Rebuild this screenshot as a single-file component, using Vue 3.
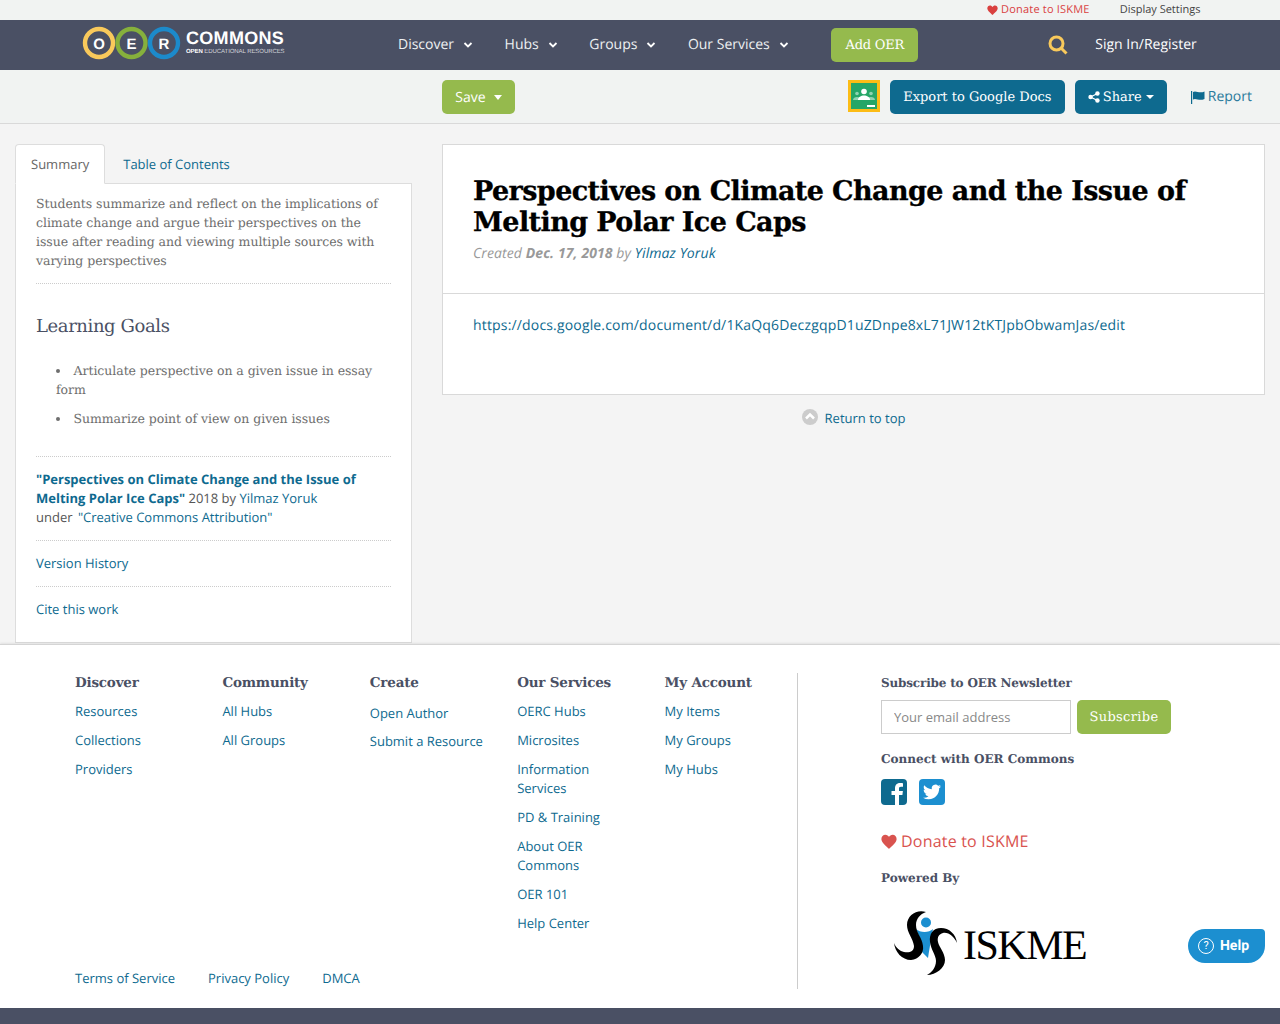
<template>
  <div class="page">
    <div class="topbar">
      <a class="donate-top">
        <svg class="heart-sm" viewBox="0 0 24 22"><path :d="heartPath" /></svg>
        Donate to ISKME
      </a>
      <a class="display-settings">Display Settings</a>
    </div>

    <nav class="navbar">
      <div class="logo">
        <svg width="104" height="34" viewBox="0 0 104 34">
          <circle cx="17" cy="17" r="14" fill="none" stroke="#f9c95b" stroke-width="4.4" />
          <circle cx="49.5" cy="17" r="14" fill="none" stroke="#86b03c" stroke-width="4.4" />
          <circle cx="82" cy="17" r="14" fill="none" stroke="#1c8acb" stroke-width="4.4" />
          <text x="17" y="22.500" class="logo-letter">O</text>
          <text x="49.5" y="22.500" class="logo-letter">E</text>
          <text x="82" y="22.500" class="logo-letter">R</text>
        </svg>
        <div class="logo-words">
          <div class="logo-main">COMMONS</div>
          <div class="logo-sub"><b>OPEN</b> EDUCATIONAL RESOURCES</div>
        </div>
      </div>
      <ul class="menu">
        <li v-for="m in menu" :key="m">
          {{ m }}
          <svg class="chev" viewBox="0 0 10 8"><path d="M1.5 2 L5 5.5 L8.5 2" /></svg>
        </li>
      </ul>
      <a class="btn add-oer">Add OER</a>
      <svg class="search" viewBox="0 0 20 20"><circle cx="8.5" cy="8.5" r="6.5" /><path d="M13.3 13.3 L18.5 18.5" /></svg>
      <a class="signin">Sign In/Register</a>
    </nav>

    <div class="subbar">
      <a class="btn save">Save <span class="caret"></span></a>
      <div class="sub-right">
        <svg class="classroom" viewBox="0 0 32 32">
          <rect x="1.5" y="1.5" width="29" height="29" fill="#25a667" stroke="#fcbc15" stroke-width="3" />
          <circle cx="9" cy="13.500" r="1.800" fill="#8fd3b0" />
          <circle cx="23" cy="13.500" r="1.800" fill="#8fd3b0" />
          <path d="M5 20 c0-4 8-4 8 0z M19 20 c0-4 8-4 8 0z" fill="#8fd3b0" />
          <circle cx="16" cy="11.500" r="2.800" fill="#fff" />
          <path d="M10 20 c0-6 12-6 12 0z" fill="#fff" />
          <rect x="19" y="25" width="8" height="2" fill="#fff" />
        </svg>
        <a class="btn blue export">Export to Google Docs</a>
        <a class="btn blue share">
          <svg class="share-ic" viewBox="0 0 14 14">
            <circle cx="11" cy="3" r="2.600" /><circle cx="3" cy="7" r="2.600" /><circle cx="11" cy="11" r="2.600" />
            <path d="M11 3 L3 7 L11 11" fill="none" stroke="#fff" stroke-width="1.400" />
          </svg>
          Share <span class="caret sm"></span>
        </a>
        <a class="report">
          <svg class="flag" viewBox="0 0 14 14">
            <rect x="0" y="1" width="1.200" height="13" />
            <path d="M2 2 C5 0 8 4 13.500 1.500 V9 C8 11.500 5 7.500 2 9.500z" />
          </svg>
          Report
        </a>
      </div>
    </div>

    <main class="content">
      <aside class="side">
        <div class="tabs">
          <a class="tab active">Summary</a>
          <a class="tab">Table of Contents</a>
        </div>
        <div class="panel">
          <p class="summary">Students summarize and reflect on the implications of climate change and argue their perspectives on the issue after reading and viewing multiple sources with varying perspectives</p>
          <div class="goals">
            <h3>Learning Goals</h3>
            <ul>
              <li>Articulate perspective on a given issue in essay form</li>
              <li>Summarize point of view on given issues</li>
            </ul>
          </div>
          <div class="cite">
            <a class="cite-title">"Perspectives on Climate Change and the Issue of Melting Polar Ice Caps"</a>
            2018 by <a>Yilmaz Yoruk</a><br />
            under <a class="cite-license">"Creative Commons Attribution"</a>
          </div>
          <div class="side-link"><a>Version History</a></div>
          <div class="side-link last"><a>Cite this work</a></div>
        </div>
      </aside>

      <section class="detail">
        <div class="card">
          <div class="card-head">
            <h1>Perspectives on Climate Change and the Issue of Melting Polar Ice Caps</h1>
            <div class="created">Created <b>Dec. 17, 2018</b> by <a>Yilmaz Yoruk</a></div>
          </div>
          <div class="card-body">
            <a>https://docs.google.com/document/d/1KaQq6DeczgqpD1uZDnpe8xL71JW12tKTJpbObwamJas/edit</a>
          </div>
        </div>
        <div class="to-top">
          <svg class="up" viewBox="0 0 16 16"><circle cx="8" cy="8" r="8" /><path d="M4 9.500 L8 5.500 L12 9.500" /></svg>
          <a>Return to top</a>
        </div>
      </section>
    </main>

    <footer class="footer">
      <div class="foot-left">
        <div class="foot-cols">
          <div v-for="col in columns" :key="col.title" class="foot-col" :class="{ create: col.title === 'Create' }">
            <h4>{{ col.title }}</h4>
            <a v-for="l in col.links" :key="l">{{ l }}</a>
          </div>
        </div>
        <div class="legal">
          <a>Terms of Service</a>
          <a>Privacy Policy</a>
          <a>DMCA</a>
        </div>
      </div>
      <div class="foot-right">
        <h4 class="news">Subscribe to OER Newsletter</h4>
        <div class="subscribe">
          <input type="text" placeholder="Your email address" />
          <a class="btn sub-btn">Subscribe</a>
        </div>
        <h4 class="connect">Connect with OER Commons</h4>
        <div class="social">
          <svg viewBox="0 0 26 26">
            <rect width="26" height="26" rx="4" fill="#0e6a8f" />
            <path d="M18 26 V16 h3.400 l.5-4 H18 V9.600 c0-1.200.4-1.900 2-1.900 h2 V4.200 C21.600 4.100 20.500 4 19.200 4 C16.200 4 14 5.900 14 9.200 V12 h-3.500 v4 H14 v10z" fill="#fff" />
          </svg>
          <svg viewBox="0 0 26 26">
            <rect width="26" height="26" rx="4" fill="#1c8fd0" />
            <g transform="translate(4 4) scale(.75)">
              <path d="M23.953 4.570a10 10 0 01-2.825.775 4.958 4.958 0 002.163-2.723c-.951.555-2.005.959-3.127 1.184a4.920 4.920 0 00-8.384 4.482C7.690 8.095 4.067 6.130 1.640 3.162a4.822 4.822 0 00-.666 2.475c0 1.710.870 3.213 2.188 4.096a4.904 4.904 0 01-2.228-.616v.06a4.923 4.923 0 003.946 4.827 4.996 4.996 0 01-2.212.085 4.936 4.936 0 004.604 3.417 9.867 9.867 0 01-6.102 2.105c-.39 0-.779-.023-1.170-.067a13.995 13.995 0 007.557 2.209c9.053 0 13.998-7.496 13.998-13.985 0-.21 0-.42-.015-.63A9.935 9.935 0 0024 4.590z" fill="#fff" />
            </g>
          </svg>
        </div>
        <a class="donate-big">
          <svg class="heart-lg" viewBox="0 0 24 22"><path :d="heartPath" /></svg>
          Donate to ISKME
        </a>
        <h4 class="powered">Powered By</h4>
        <div class="iskme">
          <svg width="72" height="72" viewBox="0 0 72 72">
            <path d="M27 23 C31 27 40 27 44 23 L42 34 C41 40 40 45 39 52 L33 46 C33 36 30 30 27 23Z" fill="#1c8fd0" />
            <circle cx="37" cy="16.500" r="5" fill="#1c8fd0" />
            <path d="M37 6 C28 3 18 9 18 19 C18 27 24 32 25 40 C25 46 20 47 15 46 C11 45 7 42 5 37 C6 46 13 54 22 54 C30 53 35 47 34 40 C33 31 27 27 27 19 C27 13 31 8 37 6Z" fill="#000" />
            <path d="M68 37 C67 28 60 22 52 22 C44 22 40 28 41 36 C42 44 47 49 47 55 C47 62 42 67 38 69 C47 69 56 62 56 54 C56 47 50 41 49 36 C48 31 50 28 54 27 C60 26 65 31 68 37Z" fill="#000" />
          </svg>
          <span class="iskme-word">ISKME</span>
        </div>
      </div>
    </footer>
    <div class="bottom-bar"></div>

    <a class="help">
      <span class="help-q">?</span>
      Help
    </a>
  </div>
</template>

<script setup>
const heartPath =
  "M12 22 C11 21 3 15 1 9.500 C-.5 5 2.500 1 6.500 1 C9 1 11 2.500 12 4.200 C13 2.500 15 1 17.500 1 C21.500 1 24.500 5 23 9.500 C21 15 13 21 12 22Z";

const menu = ["Discover", "Hubs", "Groups", "Our Services"];

const columns = [
  { title: "Discover", links: ["Resources", "Collections", "Providers"] },
  { title: "Community", links: ["All Hubs", "All Groups"] },
  { title: "Create", links: ["Open Author", "Submit a Resource"] },
  {
    title: "Our Services",
    links: ["OERC Hubs", "Microsites", "Information Services", "PD & Training", "About OER Commons", "OER 101", "Help Center"],
  },
  { title: "My Account", links: ["My Items", "My Groups", "My Hubs"] },
];
</script>

<style>
html,
body {
  margin: 0;
  background: #f4f4f4;
}
</style>

<style scoped>
.page {
  font-family: "Open Sans", sans-serif;
  font-size: 13px;
  line-height: 19px;
  color: #555;
  height: 1024px;
  overflow: hidden;
  text-rendering: geometricPrecision;
}

a {
  color: #0e6a8f;
  text-decoration: none;
}

.topbar {
  height: 20px;
  background: #f1f3f2;
  display: flex;
  align-items: center;
  font-size: 11px;
  padding-left: 987px;
  padding-bottom: 1px;
  box-sizing: border-box;
}

.donate-top {
  color: #d9403f;
  display: flex;
  align-items: center;
  gap: 3px;
  letter-spacing: 0.2px;
}

.heart-sm {
  width: 11px;
  height: 10px;
  fill: #d9403f;
}

.display-settings {
  color: #444;
  margin-left: 30px;
}

.navbar {
  height: 50px;
  background: #4a5064;
  display: flex;
  align-items: center;
  color: #fff;
  font-size: 14px;
  padding-bottom: 1px;
  box-sizing: border-box;
}

.logo {
  display: flex;
  align-items: center;
  margin-left: 82px;
  width: 316px;
  box-sizing: border-box;
  margin-top: -3px;
}

.logo-letter {
  font: bold 15px "Liberation Sans", sans-serif;
  fill: #fff;
  text-anchor: middle;
}

.logo-words {
  font-family: "Liberation Sans", sans-serif;
  margin-top: -1px;
}

.logo-main {
  font-size: 18px;
  font-weight: bold;
  line-height: 17px;
  letter-spacing: 0.3px;
}

.logo-sub {
  font-size: 6px;
  line-height: 8px;
  margin-top: 1px;
  letter-spacing: -0.07px;
  color: #d5d7dc;
}

.logo-sub b {
  color: #fff;
}

.menu {
  list-style: none;
  margin: 0;
  padding: 0;
  display: flex;
}

.menu li {
  display: flex;
  align-items: center;
  margin-right: 31.500px;
  color: #eef0f2;
}

.chev {
  width: 10px;
  height: 8px;
  margin-left: 9px;
  fill: none;
  stroke: #fff;
  stroke-width: 1.800;
}

.btn {
  display: flex;
  align-items: center;
  justify-content: center;
  height: 34px;
  border-radius: 5px;
  color: #fff;
  box-sizing: border-box;
}

.add-oer {
  background: #95ba4d;
  width: 87px;
  margin-left: 11px;
  font-family: "DejaVu Serif", serif;
  font-size: 13px;
  letter-spacing: -0.25px;
  padding-top: 2px;
}

.search {
  width: 20px;
  height: 20px;
  margin-left: 130px;
  fill: none;
  stroke: #f9c95b;
  stroke-width: 3;
}

.signin {
  color: #fff;
  margin-left: 27px;
}

.subbar {
  height: 53px;
  background: #f1f3f2;
  border-bottom: 1px solid #d9d9d9;
  display: flex;
  align-items: center;
  padding-left: 442px;
  padding-right: 28px;
  box-sizing: content-box;
}

.save {
  background: #95ba4d;
  width: 73px;
  gap: 8px;
  font-size: 14px;
  padding-top: 1px;
}

.caret {
  width: 0;
  height: 0;
  border-left: 4.500px solid transparent;
  border-right: 4.500px solid transparent;
  border-top: 5px solid #fff;
}

.caret.sm {
  border-left-width: 4px;
  border-right-width: 4px;
  border-top-width: 4px;
  margin-left: 4px;
}

.sub-right {
  margin-left: auto;
  display: flex;
  align-items: center;
}

.classroom {
  width: 32px;
  height: 32px;
  margin-top: -2px;
}

.blue {
  background: #0e6a8f;
}

.export {
  width: 175px;
  margin-left: 10px;
  font-family: "DejaVu Serif", serif;
  font-size: 13px;
  padding-top: 1px;
}

.share {
  width: 92px;
  margin-left: 10px;
  font-family: "DejaVu Serif", serif;
  font-size: 13px;
  padding-top: 1px;
}

.share-ic {
  width: 12px;
  height: 12px;
  fill: #fff;
  margin-right: 3px;
}

.report {
  margin-left: 24px;
  font-size: 14px;
  display: flex;
  align-items: center;
  gap: 3px;
  color: #2a7a9c;
}

.flag {
  width: 14px;
  height: 14px;
  fill: #0e6a8f;
}

.content {
  display: flex;
  align-items: flex-start;
  height: 520px;
  padding-left: 15px;
  box-sizing: border-box;
  padding-top: 20px;
}

.side {
  width: 397px;
}

.tabs {
  display: flex;
  height: 40px;
  position: relative;
  z-index: 1;
}

.tab {
  padding: 0 15px;
  line-height: 38px;
  border: 1px solid transparent;
  box-sizing: border-box;
  height: 40px;
  margin-right: 2px;
}

.tab.active {
  background: #fff;
  color: #666;
  border-color: #ddd;
  border-bottom-color: #fff;
  border-radius: 4px 4px 0 0;
}

.panel {
  background: #fff;
  border: 1px solid #ddd;
  margin-top: -1px;
  padding: 10px 20px 0;
  height: 460px;
  box-sizing: border-box;
}

.summary {
  margin: 0;
  padding-bottom: 13px;
  font-family: "DejaVu Serif", serif;
  font-size: 12.500px;
  letter-spacing: -0.05px;
  color: #6e6e6e;
  border-bottom: 1px dotted #ccc;
}

.goals {
  font-family: "DejaVu Serif", serif;
  font-size: 12.500px;
  letter-spacing: -0.05px;
  color: #6e6e6e;
  border-bottom: 1px dotted #ccc;
  padding-bottom: 18px;
}

.goals h3 {
  font-weight: normal;
  font-size: 18px;
  letter-spacing: -0.4px;
  line-height: 24px;
  color: #4a5064;
  margin: 31px 0 22px;
}

.goals ul {
  margin: 0;
  padding: 0 0 0 20px;
  list-style-position: inside;
}

.goals li {
  margin-bottom: 10px;
}

.cite {
  padding: 13px 0 13px;
  border-bottom: 1px dotted #ccc;
}

.cite-title {
  font-weight: bold;
}

.cite-license {
  margin-left: 2px;
}

.side-link {
  padding: 13px 0;
  border-bottom: 1px dotted #ccc;
}

.side-link.last {
  border-bottom: 0;
}

.detail {
  width: 823px;
  margin-left: 30px;
}

.card {
  background: #fff;
  border: 1px solid #d9d9d9;
  height: 251px;
  box-sizing: border-box;
}

.card-head {
  padding: 31px 30px 0;
  height: 149px;
  box-sizing: border-box;
  border-bottom: 1px solid #d9d9d9;
}

.card-head h1 {
  margin: 0;
  font-family: "DejaVu Serif", serif;
  font-weight: bold;
  font-size: 27px;
  line-height: 31px;
  letter-spacing: -0.58px;
  -webkit-text-stroke: 0.3px #000;
  color: #000;
}

.created {
  font-style: italic;
  font-size: 14px;
  color: #999;
  margin-top: 6px;
  letter-spacing: 0.1px;
}

.card-body {
  padding: 22px 30px;
  font-size: 14px;
  letter-spacing: 0.165px;
}

.to-top {
  display: flex;
  align-items: center;
  justify-content: center;
  gap: 7px;
  margin-top: 14px;
}

.up {
  width: 16px;
  height: 16px;
  margin-top: -4px;
}

.up circle {
  fill: #ccc;
}

.up path {
  fill: none;
  stroke: #fff;
  stroke-width: 2.500;
}

.footer {
  height: 364px;
  background: #fff;
  border-top: 1px solid #d5d5d5;
  box-shadow: 0 -1px 2px rgba(0, 0, 0, 0.08);
  box-sizing: border-box;
  display: flex;
  position: relative;
  padding: 28px 0 19px 75px;
}

.footer h4 {
  margin: 0;
  padding-top: 1px;
  font-family: "DejaVu Serif", serif;
  font-weight: bold;
  font-size: 13.500px;
  letter-spacing: -0.2px;
  color: #4a5064;
}

.foot-left {
  width: 723px;
  box-sizing: border-box;
  border-right: 1px solid #ccc;
  display: flex;
  flex-direction: column;
}

.foot-cols {
  display: grid;
  grid-template-columns: repeat(5, 147.400px);
  flex: 1;
}

.foot-col {
  display: flex;
  flex-direction: column;
  align-items: flex-start;
  padding-right: 30px;
  box-sizing: border-box;
}

.foot-col h4 {
  margin-bottom: 9px;
}

.foot-col a {
  margin-bottom: 10px;
}

.foot-col.create {
  padding-right: 0;
}

.foot-col.create h4 {
  margin-bottom: 11px;
}

.foot-col.create a {
  margin-bottom: 9px;
}

.legal {
  display: flex;
  gap: 33px;
  margin-bottom: 1px;
}

.foot-right {
  margin-left: 83px;
  width: 300px;
}

.foot-right h4 {
  font-size: 12px;
  letter-spacing: 0;
}

.foot-right h4.news {
  letter-spacing: -0.17px;
}

.subscribe {
  display: flex;
  gap: 6px;
  margin-top: 7px;
}

.subscribe input {
  width: 190px;
  height: 34px;
  box-sizing: border-box;
  border: 1px solid #ccc;
  padding: 0 12px;
  font: 13px "Open Sans", sans-serif;
  outline: none;
}

.subscribe input::placeholder {
  color: #888;
}

.sub-btn {
  width: 94px;
  background: #95ba4d;
  font-family: "DejaVu Serif", serif;
  font-size: 13px;
  letter-spacing: 0.35px;
}

.footer .connect {
  margin-top: 15px;
}

.social {
  display: flex;
  gap: 12px;
  margin-top: 10px;
}

.social svg {
  width: 26px;
  height: 26px;
}

.donate-big {
  color: #d9534f;
  font-size: 16px;
  line-height: 22px;
  display: flex;
  align-items: center;
  gap: 4px;
  margin-top: 25px;
  letter-spacing: 0.2px;
}

.heart-lg {
  width: 16px;
  height: 15px;
  fill: #d9534f;
}

.footer .powered {
  margin-top: 16px;
}

.iskme {
  display: flex;
  align-items: center;
  margin: 18px 0 0 8px;
}

.iskme-word {
  font-family: "Liberation Serif", serif;
  font-size: 42px;
  line-height: 40px;
  letter-spacing: -1.500px;
  color: #000;
  margin-left: 2px;
  padding-top: 7px;
}

.bottom-bar {
  height: 16px;
  background: #4a5064;
}

.help {
  position: fixed;
  left: 1188px;
  top: 929px;
  width: 77px;
  height: 34px;
  background: #1c8fd0;
  color: #fff;
  border-radius: 17px 4px 17px 17px;
  display: flex;
  align-items: center;
  justify-content: center;
  gap: 6px;
  padding-right: 6px;
  box-sizing: border-box;
  font: bold 14px Roboto, sans-serif;
}

.help-q {
  width: 16px;
  height: 16px;
  box-sizing: border-box;
  border: 1px solid #fff;
  border-radius: 50%;
  font-size: 11px;
  font-weight: normal;
  line-height: 14px;
  text-align: center;
}
</style>
